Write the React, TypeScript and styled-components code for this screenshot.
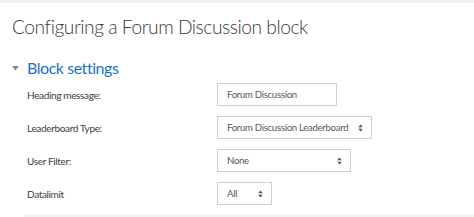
import React, { type ReactElement } from 'react'
import { styled, createGlobalStyle } from 'styled-components'

const GlobalStyle = createGlobalStyle`
  html, body {
    margin: 0;
    padding: 0;
    background: #ffffff;
  }
  body {
    font-family: Lato, "Open Sans", sans-serif;
    color: #333333;
  }
`

const Page = styled.div`
  width: 474px;
  height: 217px;
  overflow: hidden;
  display: flex;
  flex-direction: column;
  border-top: 3px solid #f1f1f1;
  box-sizing: border-box;
`

const Title = styled.h2`
  margin: 11px 0 0 12px;
  font-size: 19.2px;
  font-weight: 300;
  line-height: 26px;
  letter-spacing: -0.45px;
  color: #373a3c;
`

const Legend = styled.div`
  display: flex;
  align-items: center;
  margin: 18px 0 0 12px;
  gap: 8px;
  color: #1a72c4;
  font-size: 16px;
  line-height: 20px;
  letter-spacing: -0.45px;

  > svg {
    display: block;
  }
`

const Rows = styled.div`
  display: flex;
  flex-direction: column;
  gap: 10px;
  margin: 5px 0 0 27px;
`

const Row = styled.div`
  display: grid;
  grid-template-columns: 190px auto;
  align-items: center;
  height: 23px;
`

const Label = styled.span`
  font-size: 10px;
  letter-spacing: -0.35px;
  color: #3b3e40;
`

const Field = styled.div<{ $width: number }>`
  box-sizing: border-box;
  width: ${(p) => p.$width}px;
  height: 23px;
  border: 1px solid #cfcfcf;
  display: flex;
  align-items: center;
  justify-content: space-between;
  gap: 4px;
  padding: 0 8px 0 9px;
  font-size: 9.6px;
  letter-spacing: -0.3px;
  color: #55595c;
  white-space: nowrap;
  background: #fff;
`

const Footer = styled.div`
  margin: auto 0 0 24px;
  height: 3px;
  background: #f3f5f7;
`

const Arrows = (): ReactElement => (
  <svg width="5" height="8" viewBox="0 0 5 8">
    <path d="M2.5 0.5 L4.8 3.3 H0.2 Z" fill="#555" />
    <path d="M2.5 7.5 L4.8 4.7 H0.2 Z" fill="#555" />
  </svg>
)

const Caret = (): ReactElement => (
  <svg width="7" height="5" viewBox="0 0 7 5">
    <path d="M0 0 H7 L3.5 4.5 Z" fill="#888" />
  </svg>
)

export default function App(): ReactElement {
  return (
    <Page>
      <GlobalStyle />
      <Title>Configuring a Forum Discussion block</Title>
      <Legend>
        <Caret />
        <span>Block settings</span>
      </Legend>
      <Rows>
        <Row>
          <Label>Heading message:</Label>
          <Field $width={120}>Forum Discussion</Field>
        </Row>
        <Row>
          <Label>Leaderboard Type:</Label>
          <Field $width={155}>
            <span>Forum Discussion Leaderboard</span>
            <Arrows />
          </Field>
        </Row>
        <Row>
          <Label>User Filter:</Label>
          <Field $width={134}>
            <span>None</span>
            <Arrows />
          </Field>
        </Row>
        <Row>
          <Label>Datalimit</Label>
          <Field $width={55}>
            <span>All</span>
            <Arrows />
          </Field>
        </Row>
      </Rows>
      <Footer />
    </Page>
  )
}
